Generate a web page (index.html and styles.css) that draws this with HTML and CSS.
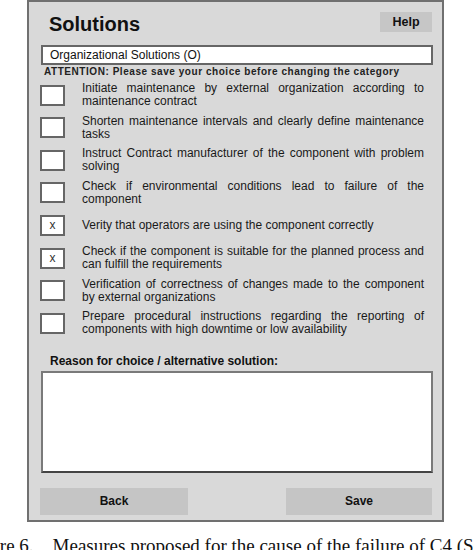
FILE: index.html
```html
<!DOCTYPE html>
<html>
<head>
<meta charset="utf-8">
<link rel="stylesheet" href="styles.css">
</head>
<body>
<div class="panel">
  <div class="header">
    <div class="title">Solutions</div>
    <div class="help">Help</div>
  </div>
  <div class="category">Organizational Solutions (O)</div>
  <div class="attention">ATTENTION: Please save your choice before changing the category</div>
  <div class="options">
    <div class="option"><div class="box"></div><div class="label">Initiate maintenance by external organization according to maintenance contract</div></div>
    <div class="option"><div class="box"></div><div class="label">Shorten maintenance intervals and clearly define maintenance tasks</div></div>
    <div class="option"><div class="box"></div><div class="label">Instruct Contract manufacturer of the component with problem solving</div></div>
    <div class="option"><div class="box"></div><div class="label">Check if environmental conditions lead to failure of the component</div></div>
    <div class="option"><div class="box">x</div><div class="label">Verity that operators are using the component correctly</div></div>
    <div class="option"><div class="box">x</div><div class="label">Check if the component is suitable for the planned process and can fulfill the requirements</div></div>
    <div class="option"><div class="box"></div><div class="label">Verification of correctness of changes made to the component by external organizations</div></div>
    <div class="option"><div class="box"></div><div class="label">Prepare procedural instructions regarding the reporting of components with high downtime or low availability</div></div>
  </div>
  <div class="reason-label">Reason for choice / alternative solution:</div>
  <div class="reason-box"></div>
  <div class="buttons">
    <div class="btn back">Back</div>
    <div class="btn save">Save</div>
  </div>
</div>
<div class="caption">Figure 6.&emsp;Measures proposed for the cause of the failure of C4 (SG1)</div>
</body>
</html>
```
FILE: styles.css
```css
html, body {
  margin: 0;
  padding: 0;
  background: #ffffff;
  overflow: hidden;
}
body {
  width: 474px;
  height: 550px;
  font-family: "Liberation Sans", Arial, sans-serif;
  color: #111;
}
.panel {
  box-sizing: border-box;
  margin-left: 27px;
  width: 417px;
  height: 522px;
  border: 2px solid #707070;
  background: #d9d9d9;
  padding: 0 9px 0 12px;
  display: flex;
  flex-direction: column;
}
.header {
  display: flex;
  justify-content: space-between;
  align-items: flex-start;
  padding-top: 10px;
}
.title {
  font-weight: bold;
  font-size: 20px;
  line-height: 20px;
  margin-top: 1.5px;
  margin-left: 8px;
}
.help {
  width: 52px;
  height: 20px;
  line-height: 20px;
  margin-right: 1px;
  background: #c6c6c6;
  text-align: center;
  font-weight: bold;
  font-size: 12.5px;
}
.category {
  margin-top: 11px;
  box-sizing: border-box;
  height: 20px;
  background: #fff;
  border: 2px solid #666;
  padding-left: 7px;
  font-size: 12px;
  line-height: 16px;
}
.attention {
  margin-top: 1px;
  margin-left: 3px;
  font-size: 10px;
  line-height: 12px;
  font-weight: bold;
  letter-spacing: 0.55px;
  color: #222;
  white-space: nowrap;
}
.options {
  margin-top: 4.7px;
  display: flex;
  flex-direction: column;
  gap: 6.6px;
}
.option {
  display: flex;
  align-items: center;
  min-height: 26px;
}
.box {
  box-sizing: border-box;
  flex: none;
  width: 25px;
  height: 21px;
  margin-left: -1px;
  background: #fff;
  border: 2px solid #666;
  font-size: 12px;
  line-height: 16px;
  text-align: center;
  color: #333;
}
.label {
  margin-left: 17px;
  width: 342px;
  font-size: 12px;
  line-height: 13px;
  text-align: justify;
  color: #1a1a1a;
}
.reason-label {
  margin-top: 17.7px;
  margin-left: 9px;
  font-weight: bold;
  font-size: 12px;
  line-height: 14px;
}
.reason-box {
  margin-top: 2.6px;
  box-sizing: border-box;
  height: 102px;
  background: #fff;
  border: 2px solid #7a7a7a;
  border-bottom-color: #444;
}
.buttons {
  margin-top: 15px;
  margin-left: -1px;
  margin-right: 1px;
  display: flex;
  justify-content: space-between;
}
.btn {
  height: 27px;
  line-height: 27px;
  background: #c5c5c5;
  text-align: center;
  font-weight: bold;
  font-size: 12px;
}
.back { width: 148px; }
.save { width: 146px; }
.caption {
  margin-top: 13px;
  margin-left: -35px;
  font-family: "Liberation Serif", "Times New Roman", serif;
  font-size: 19px;
  line-height: 22px;
  white-space: nowrap;
  color: #111;
}
```
